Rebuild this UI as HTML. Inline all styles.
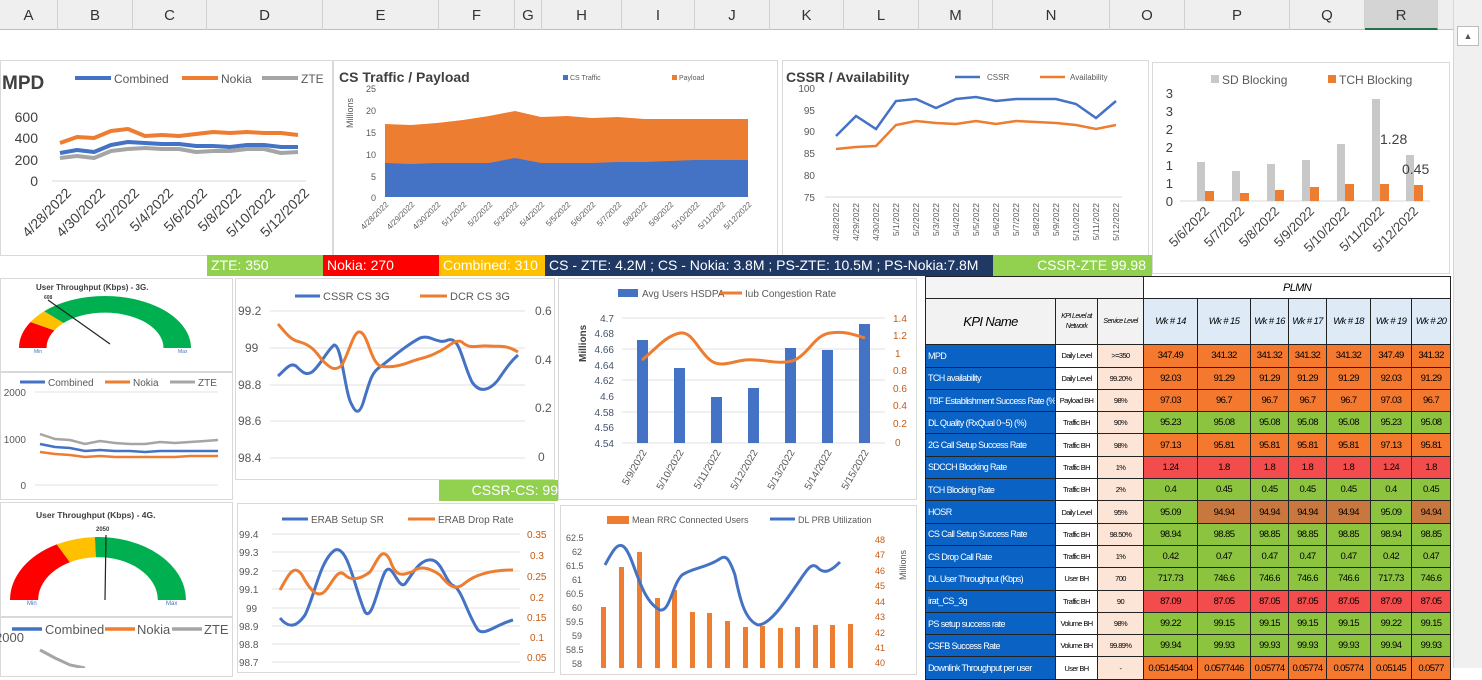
<!DOCTYPE html>
<html><head><meta charset="utf-8">
<style>
*{margin:0;padding:0;box-sizing:border-box}
body{width:1482px;height:668px;overflow:hidden;background:#fff;font-family:"Liberation Sans",sans-serif;position:relative}
.hdr{position:absolute;left:0;top:0;width:1453px;height:30px;background:#efefef;border-bottom:1px solid #bdbdbd}
.col{position:absolute;top:0;height:30px;border-right:1px solid #d0d0d0;font-size:15px;color:#333;text-align:center;line-height:32px}
.sb{position:absolute;left:1453px;top:0;width:29px;height:668px;background:#f0f0f0;border-left:1px solid #d6d6d6}
.ban{position:absolute;height:21px;font-size:14px;line-height:21px;color:#fff;padding-left:4px;white-space:nowrap;overflow:hidden}
.box{position:absolute;border:1px solid #d9d9d9;background:#fff}
table{position:absolute;left:925px;top:276px;width:525px;border-collapse:collapse;table-layout:fixed;font-family:"Liberation Sans Narrow","Liberation Sans",sans-serif;font-size:9.5px;letter-spacing:-0.6px}
td{border:1px solid #222;height:22.3px;text-align:center;white-space:nowrap;overflow:hidden;padding:0}
td.k{background:#0a63c4;color:#fff;text-align:left;padding-left:2px;font-size:9px}
td.l{background:#fff;font-size:7.5px}
td.s{background:#fce4d6;font-size:7.5px}
.o{background:#f4782e}.g{background:#8cc43f}.r{background:#f24c4c}.b{background:#c8783e}
</style></head><body>
<div class="hdr">
<div class="col" style="left:0;width:58px">A</div>
<div class="col" style="left:58px;width:75px">B</div>
<div class="col" style="left:133px;width:74px">C</div>
<div class="col" style="left:207px;width:116px">D</div>
<div class="col" style="left:323px;width:116px">E</div>
<div class="col" style="left:439px;width:76px">F</div>
<div class="col" style="left:515px;width:27px">G</div>
<div class="col" style="left:542px;width:80px">H</div>
<div class="col" style="left:622px;width:73px">I</div>
<div class="col" style="left:695px;width:75px">J</div>
<div class="col" style="left:770px;width:74px">K</div>
<div class="col" style="left:844px;width:75px">L</div>
<div class="col" style="left:919px;width:74px">M</div>
<div class="col" style="left:993px;width:117px">N</div>
<div class="col" style="left:1110px;width:75px">O</div>
<div class="col" style="left:1185px;width:105px">P</div>
<div class="col" style="left:1290px;width:75px">Q</div>
<div class="col" style="left:1365px;width:73px;background:#d4d4d4;border-bottom:2px solid #217346">R</div>
</div>
<div class="sb"><div style="position:absolute;left:3px;top:26px;width:22px;height:20px;border:1px solid #bbb;background:#fff;font-size:9px;text-align:center;line-height:18px;color:#555">▲</div></div>

<div class="box" style="left:0;top:60px;width:333px;height:196px"></div>
<div class="box" style="left:333px;top:60px;width:445px;height:196px"></div>
<div class="box" style="left:782px;top:60px;width:367px;height:196px"></div>
<div class="box" style="left:1152px;top:62px;width:298px;height:212px"></div>
<div class="box" style="left:0;top:278px;width:233px;height:94px"></div>
<div class="box" style="left:0;top:372px;width:233px;height:128px"></div>
<div class="box" style="left:235px;top:278px;width:320px;height:202px"></div>
<div class="box" style="left:558px;top:278px;width:359px;height:222px"></div>
<div class="box" style="left:0;top:502px;width:233px;height:115px"></div>
<div class="box" style="left:0;top:617px;width:233px;height:60px"></div>
<div class="box" style="left:237px;top:503px;width:318px;height:170px"></div>
<div class="box" style="left:560px;top:505px;width:357px;height:170px"></div>

<div class="ban" style="left:207px;top:255px;width:116px;background:#92d050">ZTE: 350</div>
<div class="ban" style="left:323px;top:255px;width:116px;background:#f00">Nokia: 270</div>
<div class="ban" style="left:439px;top:255px;width:106px;background:#ffc000">Combined: 310</div>
<div class="ban" style="left:545px;top:255px;width:448px;background:#1f3864">CS - ZTE: 4.2M ; CS - Nokia: 3.8M ; PS-ZTE: 10.5M ; PS-Nokia:7.8M</div>
<div class="ban" style="left:993px;top:255px;width:159px;background:#92d050;text-align:right;padding-right:6px">CSSR-ZTE 99.98</div>
<div class="ban" style="left:439px;top:480px;width:119px;background:#92d050;text-align:right;padding-right:0">CSSR-CS: 99</div>

<svg width="1482" height="668" style="position:absolute;left:0;top:0" font-family="Liberation Sans, sans-serif">
<text x="2" y="89" font-size="19" font-weight="bold" fill="#404040">MPD</text>
<line x1="75" y1="78" x2="111" y2="78" stroke="#4472c4" stroke-width="4"/><text x="114" y="83" font-size="12" fill="#595959">Combined</text>
<line x1="182" y1="78" x2="218" y2="78" stroke="#ed7d31" stroke-width="4"/><text x="221" y="83" font-size="12" fill="#595959">Nokia</text>
<line x1="262" y1="78" x2="298" y2="78" stroke="#a5a5a5" stroke-width="4"/><text x="301" y="83" font-size="12" fill="#595959">ZTE</text>
<g font-size="14" fill="#404040" text-anchor="end"><text x="38" y="122">600</text><text x="38" y="143">400</text><text x="38" y="165">200</text><text x="38" y="186">0</text></g>
<line x1="52" y1="181" x2="306" y2="181" stroke="#d9d9d9"/>
<g fill="none" stroke-width="4" stroke-linejoin="round">
<polyline stroke="#ed7d31" points="60,143 77,137 94,138 111,131 128,129 145,136 162,135 179,136 196,134 213,132 230,133 247,132 264,133 281,133 298,135"/>
<polyline stroke="#4472c4" points="60,153 77,150 94,152 111,145 128,142 145,143 162,144 179,144 196,146 213,146 230,147 247,145 264,145 281,147 298,147"/>
<polyline stroke="#a5a5a5" points="60,158 77,156 94,158 111,151 128,149 145,148 162,149 179,149 196,152 213,151 230,151 247,149 264,149 281,153 298,152"/>
</g>
<g font-size="14" fill="#404040" text-anchor="end">
<text transform="translate(72,194) rotate(-45)">4/28/2022</text><text transform="translate(106,194) rotate(-45)">4/30/2022</text><text transform="translate(140,194) rotate(-45)">5/2/2022</text><text transform="translate(174,194) rotate(-45)">5/4/2022</text><text transform="translate(208,194) rotate(-45)">5/6/2022</text><text transform="translate(242,194) rotate(-45)">5/8/2022</text><text transform="translate(276,194) rotate(-45)">5/10/2022</text><text transform="translate(310,194) rotate(-45)">5/12/2022</text>
</g>
<text x="339" y="82" font-size="14" font-weight="bold" fill="#404040">CS Traffic / Payload</text>
<rect x="563" y="75" width="5" height="5" fill="#4472c4"/><text x="570" y="80" font-size="7" fill="#595959">CS Traffic</text>
<rect x="672" y="75" width="5" height="5" fill="#ed7d31"/><text x="679" y="80" font-size="7" fill="#595959">Payload</text>
<text transform="translate(353,128) rotate(-90)" font-size="9" fill="#595959">Millions</text>
<g font-size="9" fill="#595959" text-anchor="end"><text x="376" y="92">25</text><text x="376" y="114">20</text><text x="376" y="136">15</text><text x="376" y="158">10</text><text x="376" y="180">5</text><text x="376" y="201">0</text></g>
<polygon fill="#ed7d31" points="385,124 411,125 437,123 463,120 489,116 515,111 541,117 567,116 592,118 618,117 644,119 670,119 696,119 722,119 748,119 748,197 385,197"/>
<polygon fill="#4472c4" points="385,163 411,164 437,163 463,163 489,163 515,158 541,163 567,163 592,163 618,162 644,162 670,161 696,160 722,160 748,160 748,197 385,197"/>
<g font-size="8" fill="#595959" text-anchor="end">
<text transform="translate(389,205) rotate(-45)">4/28/2022</text><text transform="translate(415,205) rotate(-45)">4/29/2022</text><text transform="translate(441,205) rotate(-45)">4/30/2022</text><text transform="translate(467,205) rotate(-45)">5/1/2022</text><text transform="translate(493,205) rotate(-45)">5/2/2022</text><text transform="translate(519,205) rotate(-45)">5/3/2022</text><text transform="translate(545,205) rotate(-45)">5/4/2022</text><text transform="translate(571,205) rotate(-45)">5/5/2022</text><text transform="translate(596,205) rotate(-45)">5/6/2022</text><text transform="translate(622,205) rotate(-45)">5/7/2022</text><text transform="translate(648,205) rotate(-45)">5/8/2022</text><text transform="translate(674,205) rotate(-45)">5/9/2022</text><text transform="translate(700,205) rotate(-45)">5/10/2022</text><text transform="translate(726,205) rotate(-45)">5/11/2022</text><text transform="translate(752,205) rotate(-45)">5/12/2022</text>
</g>
<text x="786" y="82" font-size="14" font-weight="bold" fill="#404040">CSSR / Availability</text>
<line x1="955" y1="77" x2="980" y2="77" stroke="#4472c4" stroke-width="2.5"/><text x="987" y="80" font-size="8" fill="#595959">CSSR</text>
<line x1="1040" y1="77" x2="1065" y2="77" stroke="#ed7d31" stroke-width="2.5"/><text x="1070" y="80" font-size="8" fill="#595959">Availability</text>
<g font-size="10" fill="#595959" text-anchor="end"><text x="815" y="92">100</text><text x="815" y="114">95</text><text x="815" y="135">90</text><text x="815" y="157">85</text><text x="815" y="179">80</text><text x="815" y="201">75</text></g>
<line x1="825" y1="197" x2="1122" y2="197" stroke="#d9d9d9"/>
<polyline fill="none" stroke="#4472c4" stroke-width="2.5" points="836,136 856,116 876,129 896,101 916,99 936,108 956,99 976,97 996,101 1016,99 1036,99 1056,99 1076,104 1096,118 1116,101"/>
<polyline fill="none" stroke="#ed7d31" stroke-width="2.5" points="836,149 856,147 876,146 896,125 916,121 936,123 956,124 976,121 996,124 1016,121 1036,122 1056,123 1076,125 1096,129 1116,125"/>
<g font-size="8.5" fill="#595959" text-anchor="end">
<text transform="translate(839,203) rotate(-90)">4/28/2022</text><text transform="translate(859,203) rotate(-90)">4/29/2022</text><text transform="translate(879,203) rotate(-90)">4/30/2022</text><text transform="translate(899,203) rotate(-90)">5/1/2022</text><text transform="translate(919,203) rotate(-90)">5/2/2022</text><text transform="translate(939,203) rotate(-90)">5/3/2022</text><text transform="translate(959,203) rotate(-90)">5/4/2022</text><text transform="translate(979,203) rotate(-90)">5/5/2022</text><text transform="translate(999,203) rotate(-90)">5/6/2022</text><text transform="translate(1019,203) rotate(-90)">5/7/2022</text><text transform="translate(1039,203) rotate(-90)">5/8/2022</text><text transform="translate(1059,203) rotate(-90)">5/9/2022</text><text transform="translate(1079,203) rotate(-90)">5/10/2022</text><text transform="translate(1099,203) rotate(-90)">5/11/2022</text><text transform="translate(1119,203) rotate(-90)">5/12/2022</text>
</g>
<rect x="1211" y="75" width="8" height="8" fill="#c8c8c8"/><text x="1222" y="84" font-size="12" fill="#595959">SD Blocking</text>
<rect x="1328" y="75" width="8" height="8" fill="#ed7d31"/><text x="1339" y="84" font-size="12" fill="#595959">TCH Blocking</text>
<g font-size="13" fill="#404040" text-anchor="end"><text x="1173" y="98">3</text><text x="1173" y="116">3</text><text x="1173" y="134">2</text><text x="1173" y="152">2</text><text x="1173" y="170">1</text><text x="1173" y="188">1</text><text x="1173" y="206">0</text></g>
<line x1="1180" y1="201" x2="1430" y2="201" stroke="#d9d9d9"/>
<g fill="#c8c8c8"><rect x="1197" y="162" width="8" height="39"/><rect x="1232" y="171" width="8" height="30"/><rect x="1267" y="164" width="8" height="37"/><rect x="1302" y="160" width="8" height="41"/><rect x="1337" y="144" width="8" height="57"/><rect x="1372" y="99" width="8" height="102"/><rect x="1406" y="155" width="8" height="46"/></g>
<g fill="#ed7d31"><rect x="1205" y="191" width="9" height="10"/><rect x="1240" y="193" width="9" height="8"/><rect x="1275" y="190" width="9" height="11"/><rect x="1310" y="187" width="9" height="14"/><rect x="1345" y="184" width="9" height="17"/><rect x="1380" y="184" width="9" height="17"/><rect x="1414" y="185" width="9" height="16"/></g>
<text x="1380" y="144" font-size="14" fill="#404040">1.28</text><text x="1402" y="174" font-size="14" fill="#404040">0.45</text>
<g font-size="13" fill="#404040" text-anchor="end">
<text transform="translate(1210,212) rotate(-45)">5/6/2022</text><text transform="translate(1245,212) rotate(-45)">5/7/2022</text><text transform="translate(1280,212) rotate(-45)">5/8/2022</text><text transform="translate(1315,212) rotate(-45)">5/9/2022</text><text transform="translate(1350,212) rotate(-45)">5/10/2022</text><text transform="translate(1385,212) rotate(-45)">5/11/2022</text><text transform="translate(1419,212) rotate(-45)">5/12/2022</text>
</g>
<text x="36" y="290" font-size="8" font-weight="bold" fill="#404040">User Throughput (Kbps) - 3G.</text>
<text x="44" y="299" font-size="5" font-weight="bold" fill="#404040">608</text>
<g transform="translate(105,348) scale(86,52)">
<path fill="#f00" d="M-1 0A1 1 0 0 1-.866-.5L-.589-.34A.68 .68 0 0 0-.68 0Z"/>
<path fill="#ffc000" d="M-.866-.5A1 1 0 0 1-.707-.707L-.481-.481A.68 .68 0 0 0-.589-.34Z"/>
<path fill="#00b050" d="M-.707-.707A1 1 0 0 1 1 0L.68 0A.68 .68 0 0 0-.481-.481Z"/>
</g>
<line x1="48" y1="300" x2="110" y2="344" stroke="#222" stroke-width="1.2"/>
<text x="34" y="353" font-size="5" fill="#4472c4">Min</text><text x="178" y="353" font-size="5" fill="#4472c4">Max</text>
<line x1="20" y1="382" x2="45" y2="382" stroke="#4472c4" stroke-width="3"/><text x="48" y="386" font-size="10" fill="#595959">Combined</text>
<line x1="105" y1="382" x2="130" y2="382" stroke="#ed7d31" stroke-width="3"/><text x="133" y="386" font-size="10" fill="#595959">Nokia</text>
<line x1="170" y1="382" x2="195" y2="382" stroke="#a5a5a5" stroke-width="3"/><text x="198" y="386" font-size="10" fill="#595959">ZTE</text>
<g font-size="10" fill="#595959" text-anchor="end"><text x="26" y="396">2000</text><text x="26" y="443">1000</text><text x="26" y="489">0</text></g>
<g stroke="#e0e0e0"><line x1="35" y1="392" x2="218" y2="392"/><line x1="35" y1="485" x2="218" y2="485"/></g>
<g fill="none" stroke-width="2.5">
<polyline stroke="#a5a5a5" points="40,434 55,439 70,440 85,444 100,441 115,443 130,444 145,444 160,442 175,443 190,442 205,441 218,440"/>
<polyline stroke="#4472c4" points="40,444 55,447 70,448 85,451 100,450 115,451 130,451 145,452 160,451 175,451 190,451 205,451 218,451"/>
<polyline stroke="#ed7d31" points="40,452 55,454 70,455 85,457 100,456 115,457 130,457 145,457 160,457 175,457 190,456 205,456 218,456"/>
</g>
<line x1="295" y1="296" x2="320" y2="296" stroke="#4472c4" stroke-width="3"/><text x="323" y="300" font-size="11" fill="#595959">CSSR CS 3G</text>
<line x1="420" y1="296" x2="447" y2="296" stroke="#ed7d31" stroke-width="3"/><text x="450" y="300" font-size="11" fill="#595959">DCR CS 3G</text>
<g font-size="12" fill="#595959"><text x="238" y="315">99.2</text><text x="245" y="352">99</text><text x="238" y="389">98.8</text><text x="238" y="425">98.6</text><text x="238" y="462">98.4</text>
<text x="535" y="315">0.6</text><text x="535" y="364">0.4</text><text x="535" y="412">0.2</text><text x="538" y="461">0</text></g>
<g stroke="#e0e0e0"><line x1="270" y1="311" x2="525" y2="311"/><line x1="270" y1="348" x2="525" y2="348"/><line x1="270" y1="385" x2="525" y2="385"/><line x1="270" y1="421" x2="525" y2="421"/><line x1="270" y1="458" x2="525" y2="458"/></g>
<path fill="none" stroke="#4472c4" stroke-width="3" d="M278,376 C285,370 290,362 296,366 C302,372 306,376 312,372 C320,366 326,352 334,345 C342,344 345,395 352,405 C356,414 360,414 364,400 C370,380 372,372 380,367 C392,358 405,346 420,338 C430,334 438,345 448,340 C460,336 462,362 472,382 C480,394 490,390 498,380 C505,370 510,362 518,355"/>
<path fill="none" stroke="#ed7d31" stroke-width="3" d="M278,324 C285,332 290,340 300,342 C310,345 315,350 322,360 C330,368 335,372 342,365 C350,350 354,330 360,332 C368,334 370,360 380,366 C390,368 400,366 410,362 C420,358 428,358 438,352 C448,348 455,338 462,342 C470,350 478,345 488,346 C498,347 505,344 518,352"/>
<rect x="618" y="289" width="20" height="8" fill="#4472c4"/><text x="642" y="297" font-size="10" fill="#595959">Avg Users HSDPA</text>
<line x1="720" y1="293" x2="742" y2="293" stroke="#ed7d31" stroke-width="3"/><text x="745" y="297" font-size="10" fill="#595959">Iub Congestion Rate</text>
<text transform="translate(586,362) rotate(-90)" font-size="10" font-weight="bold" fill="#404040">Millions</text>
<g font-size="10" fill="#44546a" text-anchor="end"><text x="614" y="322">4.7</text><text x="614" y="337">4.68</text><text x="614" y="353">4.66</text><text x="614" y="369">4.64</text><text x="614" y="384">4.62</text><text x="614" y="400">4.6</text><text x="614" y="416">4.58</text><text x="614" y="431">4.56</text><text x="614" y="447">4.54</text></g>
<g font-size="10" fill="#c55a11"><text x="893" y="322">1.4</text><text x="893" y="339">1.2</text><text x="895" y="357">1</text><text x="893" y="374">0.8</text><text x="893" y="392">0.6</text><text x="893" y="409">0.4</text><text x="893" y="427">0.2</text><text x="895" y="446">0</text></g>
<g stroke="#e0e0e0"><line x1="622" y1="318" x2="885" y2="318"/><line x1="622" y1="349" x2="885" y2="349"/><line x1="622" y1="380" x2="885" y2="380"/><line x1="622" y1="412" x2="885" y2="412"/><line x1="622" y1="443" x2="885" y2="443"/></g>
<g fill="#4472c4"><rect x="637" y="340" width="11" height="103"/><rect x="674" y="368" width="11" height="75"/><rect x="711" y="397" width="11" height="46"/><rect x="748" y="388" width="11" height="55"/><rect x="785" y="348" width="11" height="95"/><rect x="822" y="350" width="11" height="93"/><rect x="859" y="324" width="11" height="119"/></g>
<path fill="none" stroke="#ed7d31" stroke-width="3" d="M642,360 C655,350 665,336 680,333 C692,331 698,350 710,360 C720,368 730,362 745,360 C760,358 780,366 795,360 C810,352 815,335 830,333 C845,331 852,334 865,338"/>
<g font-size="10" fill="#595959" text-anchor="end">
<text transform="translate(647,452) rotate(-60)">5/9/2022</text><text transform="translate(684,452) rotate(-60)">5/10/2022</text><text transform="translate(721,452) rotate(-60)">5/11/2022</text><text transform="translate(758,452) rotate(-60)">5/12/2022</text><text transform="translate(795,452) rotate(-60)">5/13/2022</text><text transform="translate(832,452) rotate(-60)">5/14/2022</text><text transform="translate(869,452) rotate(-60)">5/15/2022</text>
</g>
<text x="36" y="518" font-size="8.5" font-weight="bold" fill="#404040">User Throughput (Kbps) - 4G.</text>
<text x="96" y="531" font-size="6" font-weight="bold" fill="#404040">2050</text>
<g transform="translate(98,600) scale(88,63)">
<path fill="#f00" d="M-1 0A1 1 0 0 1-.469-.883L-.319-.6A.68 .68 0 0 0-.68 0Z"/>
<path fill="#ffc000" d="M-.469-.883A1 1 0 0 1-.035-.999L-.024-.679A.68 .68 0 0 0-.319-.6Z"/>
<path fill="#00b050" d="M-.035-.999A1 1 0 0 1 1 0L.68 0A.68 .68 0 0 0-.024-.679Z"/>
</g>
<line x1="106" y1="535" x2="105" y2="600" stroke="#222" stroke-width="1.2"/>
<text x="27" y="605" font-size="6" fill="#4472c4">Min</text><text x="166" y="605" font-size="6" fill="#4472c4">Max</text>
<line x1="12" y1="629" x2="42" y2="629" stroke="#4472c4" stroke-width="3.5"/><text x="45" y="634" font-size="13" fill="#595959">Combined</text>
<line x1="105" y1="629" x2="135" y2="629" stroke="#ed7d31" stroke-width="3.5"/><text x="137" y="634" font-size="13" fill="#595959">Nokia</text>
<line x1="172" y1="629" x2="202" y2="629" stroke="#a5a5a5" stroke-width="3.5"/><text x="204" y="634" font-size="13" fill="#595959">ZTE</text>
<text x="-5" y="642" font-size="13" fill="#595959">2000</text>
<polyline fill="none" stroke="#a5a5a5" stroke-width="3" points="40,650 55,658 70,665 85,668"/>
<line x1="282" y1="519" x2="308" y2="519" stroke="#4472c4" stroke-width="3"/><text x="311" y="523" font-size="10" fill="#595959">ERAB Setup SR</text>
<line x1="408" y1="519" x2="435" y2="519" stroke="#ed7d31" stroke-width="3"/><text x="438" y="523" font-size="10" fill="#595959">ERAB Drop Rate</text>
<g font-size="10" fill="#595959"><text x="239" y="538">99.4</text><text x="239" y="556">99.3</text><text x="239" y="575">99.2</text><text x="239" y="593">99.1</text><text x="246" y="612">99</text><text x="239" y="630">98.9</text><text x="239" y="648">98.8</text><text x="239" y="666">98.7</text></g>
<g font-size="10" fill="#c55a11"><text x="527" y="538">0.35</text><text x="530" y="559">0.3</text><text x="527" y="580">0.25</text><text x="530" y="601">0.2</text><text x="527" y="621">0.15</text><text x="530" y="641">0.1</text><text x="527" y="661">0.05</text></g>
<g stroke="#e0e0e0"><line x1="272" y1="534" x2="520" y2="534"/><line x1="272" y1="552" x2="520" y2="552"/><line x1="272" y1="571" x2="520" y2="571"/><line x1="272" y1="589" x2="520" y2="589"/><line x1="272" y1="608" x2="520" y2="608"/><line x1="272" y1="626" x2="520" y2="626"/><line x1="272" y1="644" x2="520" y2="644"/><line x1="272" y1="662" x2="520" y2="662"/></g>
<path fill="none" stroke="#4472c4" stroke-width="3" d="M280,618 C288,628 296,628 305,615 C315,595 320,560 335,550 C348,545 355,590 365,612 C372,622 378,585 385,572 C392,560 398,590 405,584 C412,575 420,558 432,560 C442,562 445,580 452,585 C462,588 466,612 478,630 C485,636 495,625 513,620"/>
<path fill="none" stroke="#ed7d31" stroke-width="3" d="M280,590 C287,578 293,562 302,575 C310,590 318,600 326,590 C334,580 338,568 345,575 C352,582 362,578 370,572 C378,560 382,545 390,560 C396,578 402,575 412,572 C420,565 430,568 440,575 C448,585 455,592 465,583 C475,575 490,570 513,570"/>
<rect x="607" y="516" width="22" height="8" fill="#ed7d31"/><text x="632" y="523" font-size="9" fill="#595959">Mean RRC Connected Users</text>
<line x1="770" y1="519" x2="795" y2="519" stroke="#4472c4" stroke-width="3"/><text x="798" y="523" font-size="9" fill="#595959">DL PRB Utilization</text>
<g font-size="9" fill="#595959"><text x="566" y="541">62.5</text><text x="572" y="555">62</text><text x="566" y="569">61.5</text><text x="572" y="583">61</text><text x="566" y="597">60.5</text><text x="572" y="611">60</text><text x="566" y="625">59.5</text><text x="572" y="639">59</text><text x="566" y="653">58.5</text><text x="572" y="667">58</text></g>
<g font-size="9" fill="#c55a11"><text x="875" y="543">48</text><text x="875" y="558">47</text><text x="875" y="574">46</text><text x="875" y="589">45</text><text x="875" y="605">44</text><text x="875" y="620">43</text><text x="875" y="636">42</text><text x="875" y="651">41</text><text x="875" y="666">40</text></g>
<text transform="translate(906,580) rotate(-90)" font-size="9" fill="#595959">Millions</text>
<g fill="#ed7d31"><rect x="601" y="607" width="5" height="61"/><rect x="619" y="567" width="5" height="101"/><rect x="637" y="552" width="5" height="116"/><rect x="655" y="598" width="5" height="70"/><rect x="672" y="590" width="5" height="78"/><rect x="690" y="612" width="5" height="56"/><rect x="707" y="613" width="5" height="55"/><rect x="725" y="621" width="5" height="47"/><rect x="743" y="627" width="5" height="41"/><rect x="760" y="626" width="5" height="42"/><rect x="778" y="628" width="5" height="40"/><rect x="795" y="627" width="5" height="41"/><rect x="813" y="625" width="5" height="43"/><rect x="830" y="625" width="5" height="43"/><rect x="848" y="624" width="5" height="44"/></g>
<path fill="none" stroke="#4472c4" stroke-width="3" d="M605,565 C612,552 618,540 625,548 C635,560 640,600 660,610 C670,612 672,585 682,575 C692,568 705,568 718,560 C725,555 728,555 735,575 C740,600 745,620 758,625 C770,625 785,602 800,580 C808,568 812,562 818,568 C825,575 832,570 840,562"/>
</svg>

<table>
<colgroup><col style="width:130px"><col style="width:42px"><col style="width:46px"><col style="width:54px"><col style="width:53px"><col style="width:38px"><col style="width:38px"><col style="width:44px"><col style="width:41px"><col style="width:39px"></colgroup>
<tr><td colspan="3" style="background:#f4f4f4;height:22px"></td><td colspan="7" style="background:#fff;font-style:italic;font-size:11px">PLMN</td></tr>
<tr style="height:46px"><td style="background:#f2f2f2;font-style:italic;font-size:13px">KPI Name</td><td style="background:#f2f2f2;font-style:italic;font-size:7px;white-space:normal;line-height:10px">KPI Level at Network</td><td style="background:#f2f2f2;font-style:italic;font-size:7px">Service Level</td>
<td style="background:#deebf7;font-style:italic">Wk # 14</td><td style="background:#deebf7;font-style:italic">Wk # 15</td><td style="background:#deebf7;font-style:italic">Wk # 16</td><td style="background:#deebf7;font-style:italic">Wk # 17</td><td style="background:#deebf7;font-style:italic">Wk # 18</td><td style="background:#deebf7;font-style:italic">Wk # 19</td><td style="background:#deebf7;font-style:italic">Wk # 20</td></tr>
<tr><td class="k">MPD</td><td class="l">Daily Level</td><td class="s">&gt;=350</td><td class="o">347.49</td><td class="o">341.32</td><td class="o">341.32</td><td class="o">341.32</td><td class="o">341.32</td><td class="o">347.49</td><td class="o">341.32</td></tr>
<tr><td class="k">TCH availability</td><td class="l">Daily Level</td><td class="s">99.20%</td><td class="o">92.03</td><td class="o">91.29</td><td class="o">91.29</td><td class="o">91.29</td><td class="o">91.29</td><td class="o">92.03</td><td class="o">91.29</td></tr>
<tr><td class="k">TBF Establishment Success Rate (%)</td><td class="l">Payload BH</td><td class="s">98%</td><td class="o">97.03</td><td class="o">96.7</td><td class="o">96.7</td><td class="o">96.7</td><td class="o">96.7</td><td class="o">97.03</td><td class="o">96.7</td></tr>
<tr><td class="k">DL Quality (RxQual 0~5) (%)</td><td class="l">Traffic BH</td><td class="s">90%</td><td class="g">95.23</td><td class="g">95.08</td><td class="g">95.08</td><td class="g">95.08</td><td class="g">95.08</td><td class="g">95.23</td><td class="g">95.08</td></tr>
<tr><td class="k">2G Call Setup Success Rate</td><td class="l">Traffic BH</td><td class="s">98%</td><td class="o">97.13</td><td class="o">95.81</td><td class="o">95.81</td><td class="o">95.81</td><td class="o">95.81</td><td class="o">97.13</td><td class="o">95.81</td></tr>
<tr><td class="k">SDCCH Blocking Rate</td><td class="l">Traffic BH</td><td class="s">1%</td><td class="r">1.24</td><td class="r">1.8</td><td class="r">1.8</td><td class="r">1.8</td><td class="r">1.8</td><td class="r">1.24</td><td class="r">1.8</td></tr>
<tr><td class="k">TCH Blocking Rate</td><td class="l">Traffic BH</td><td class="s">2%</td><td class="g">0.4</td><td class="g">0.45</td><td class="g">0.45</td><td class="g">0.45</td><td class="g">0.45</td><td class="g">0.4</td><td class="g">0.45</td></tr>
<tr><td class="k">HOSR</td><td class="l">Daily Level</td><td class="s">95%</td><td class="g">95.09</td><td class="b">94.94</td><td class="b">94.94</td><td class="b">94.94</td><td class="b">94.94</td><td class="g">95.09</td><td class="b">94.94</td></tr>
<tr><td class="k">CS Call Setup Success Rate</td><td class="l">Traffic BH</td><td class="s">98.50%</td><td class="g">98.94</td><td class="g">98.85</td><td class="g">98.85</td><td class="g">98.85</td><td class="g">98.85</td><td class="g">98.94</td><td class="g">98.85</td></tr>
<tr><td class="k">CS Drop Call Rate</td><td class="l">Traffic BH</td><td class="s">1%</td><td class="g">0.42</td><td class="g">0.47</td><td class="g">0.47</td><td class="g">0.47</td><td class="g">0.47</td><td class="g">0.42</td><td class="g">0.47</td></tr>
<tr><td class="k">DL User Throughput (Kbps)</td><td class="l">User BH</td><td class="s">700</td><td class="g">717.73</td><td class="g">746.6</td><td class="g">746.6</td><td class="g">746.6</td><td class="g">746.6</td><td class="g">717.73</td><td class="g">746.6</td></tr>
<tr><td class="k">irat_CS_3g</td><td class="l">Traffic BH</td><td class="s">90</td><td class="r">87.09</td><td class="r">87.05</td><td class="r">87.05</td><td class="r">87.05</td><td class="r">87.05</td><td class="r">87.09</td><td class="r">87.05</td></tr>
<tr><td class="k">PS setup success rate</td><td class="l">Volume BH</td><td class="s">98%</td><td class="g">99.22</td><td class="g">99.15</td><td class="g">99.15</td><td class="g">99.15</td><td class="g">99.15</td><td class="g">99.22</td><td class="g">99.15</td></tr>
<tr><td class="k">CSFB Success Rate</td><td class="l">Volume BH</td><td class="s">99.89%</td><td class="g">99.94</td><td class="g">99.93</td><td class="g">99.93</td><td class="g">99.93</td><td class="g">99.93</td><td class="g">99.94</td><td class="g">99.93</td></tr>
<tr><td class="k">Downlink Throughput per user</td><td class="l">User BH</td><td class="s">-</td><td class="o">0.05145404</td><td class="o">0.0577446</td><td class="o">0.05774</td><td class="o">0.05774</td><td class="o">0.05774</td><td class="o">0.05145</td><td class="o">0.0577</td></tr>
</table>
</body></html>
